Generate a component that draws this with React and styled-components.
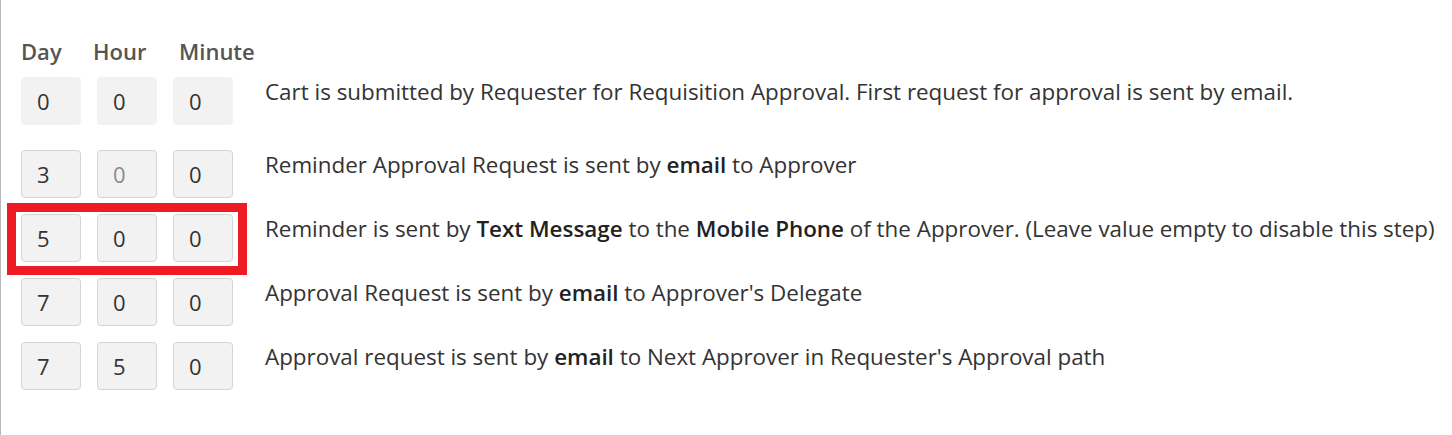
import styled, { createGlobalStyle } from "styled-components";

const GlobalStyle = createGlobalStyle`
  html, body {
    margin: 0;
    background: #fff;
  }
  body {
    font-family: "Open Sans", "Liberation Sans", sans-serif;
    color: #333;
  }
`;

const Page = styled.div`
  min-height: 435px;
  box-sizing: border-box;
  border-left: 1px solid #b8b8b8;
  padding: 36px 0 0 20px;
`;

const HeaderRow = styled.div`
  display: flex;
  margin-bottom: 11px;
`;

const HeaderCell = styled.div`
  width: ${(p) => p.$width}px;
  padding-left: ${(p) => p.$offset || 0}px;
  font-size: 22px;
  line-height: 30px;
  font-weight: 600;
  color: #555;
`;

const Steps = styled.div`
  display: flex;
  flex-direction: column;
  gap: 16px;
`;

const Step = styled.div`
  display: flex;
  align-items: flex-start;
  gap: 32px;
  margin-bottom: ${(p) => (p.$first ? 9 : 0)}px;
`;

const Fields = styled.div`
  position: relative;
  display: flex;
  gap: 16px;
`;

// red frame drawn over the step being described
const Highlight = styled.div`
  position: absolute;
  top: -11px;
  left: -14px;
  right: -14px;
  bottom: -13px;
  border: 9px solid #ed1c24;
  pointer-events: none;
`;

const Field = styled.input`
  width: 60px;
  height: 48px;
  box-sizing: border-box;
  padding: 0 0 0 15px;
  margin: 0;
  border: 1.5px solid ${(p) => (p.$plain ? "#f2f2f2" : "#d4d4d4")};
  border-radius: 4px;
  background: #f2f2f2;
  font-family: "Open Sans", "Liberation Sans", sans-serif;
  font-size: 22px;
  color: #333;
  outline: none;

  &::placeholder {
    color: #8a8a8a;
  }
`;

const Description = styled.p`
  margin: 0;
  font-size: 22.4px;
  line-height: 30px;
  color: #333;
  white-space: nowrap;

  b {
    font-weight: 600;
    color: #222;
  }
`;

const steps = [
  {
    values: ["0", "0", "0"],
    plain: true,
    text: <>Cart is submitted by Requester for Requisition Approval. First request for approval is sent by email.</>,
  },
  {
    values: ["3", "", "0"],
    text: <>Reminder Approval Request is sent by <b>email</b> to Approver</>,
  },
  {
    values: ["5", "0", "0"],
    marked: true,
    text: (
      <>
        Reminder is sent by <b>Text Message</b> to the <b>Mobile Phone</b> of the Approver. (Leave value empty to disable this step)
      </>
    ),
  },
  {
    values: ["7", "0", "0"],
    text: <>Approval Request is sent by <b>email</b> to Approver's Delegate</>,
  },
  {
    values: ["7", "5", "0"],
    text: <>Approval request is sent by <b>email</b> to Next Approver in Requester's Approval path</>,
  },
];

export default function App() {
  return (
    <>
      <GlobalStyle />
      <Page>
        <HeaderRow>
          <HeaderCell $width={72}>Day</HeaderCell>
          <HeaderCell $width={85}>Hour</HeaderCell>
          <HeaderCell $width={90} $offset={1}>Minute</HeaderCell>
        </HeaderRow>
        <Steps>
          {steps.map((step, i) => (
            <Step key={i} $first={i === 0}>
              <Fields>
                {step.values.map((v, j) => (
                  <Field
                    key={j}
                    $plain={step.plain}
                    defaultValue={v}
                    placeholder="0"
                    readOnly
                  />
                ))}
                {step.marked && <Highlight />}
              </Fields>
              <Description>{step.text}</Description>
            </Step>
          ))}
        </Steps>
      </Page>
    </>
  );
}
